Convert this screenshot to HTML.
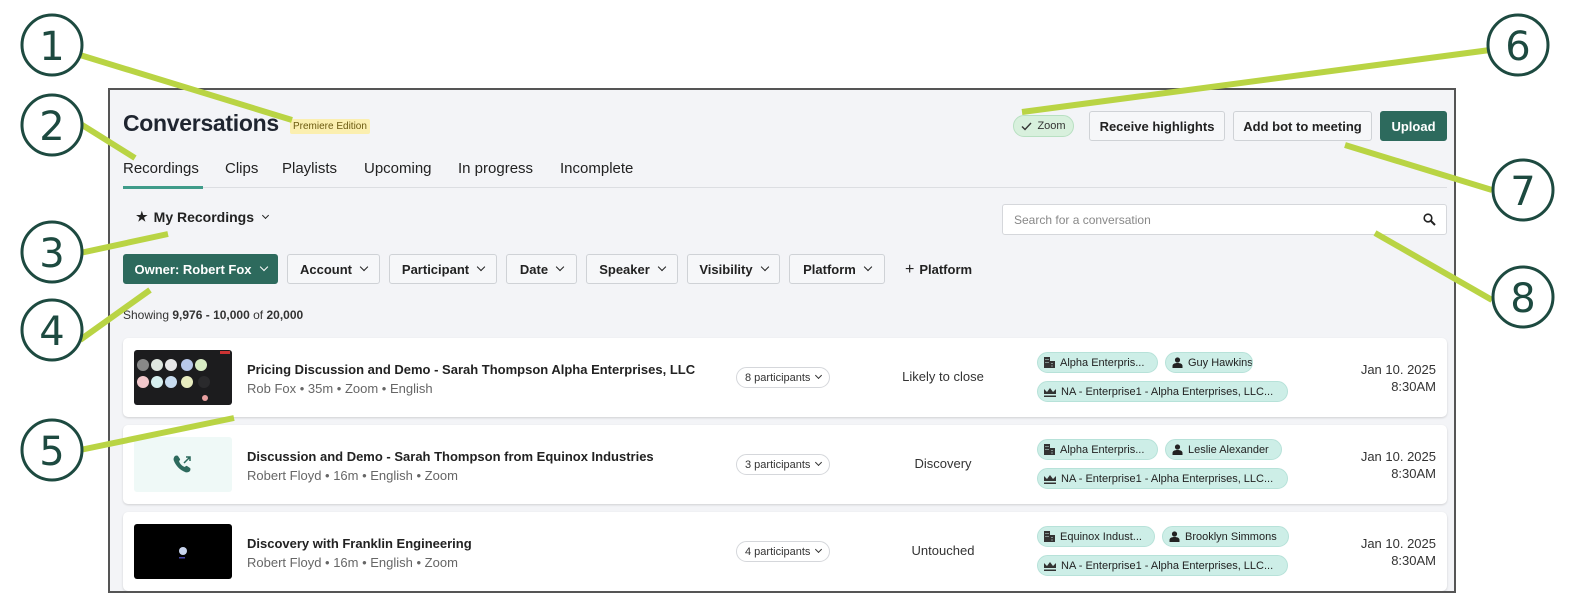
<!DOCTYPE html>
<html><head><meta charset="utf-8"><style>
*{box-sizing:border-box;margin:0;padding:0}
body{width:1586px;height:612px;background:#fff;position:relative;overflow:hidden;font-family:"Liberation Sans",sans-serif;color:#1f2328}
.frame{position:absolute;left:108px;top:88px;width:1348px;height:505px;background:#f3f4f7;border:2px solid #555;overflow:hidden}
.abs{position:absolute}
.btn{position:absolute;height:30px;border:1px solid #cfd2d6;border-radius:3px;background:#f6f7f9;font-size:13px;font-weight:bold;display:flex;align-items:center;justify-content:center;color:#222;white-space:nowrap}
.chev{display:inline-block;width:6px;height:6px;border-right:1.6px solid currentColor;border-bottom:1.6px solid currentColor;transform:rotate(45deg);margin-left:9px;margin-top:-4px}
.tab{position:absolute;top:70px;font-size:15px;color:#222}
.card{position:absolute;left:13px;width:1324px;height:79px;background:#fff;border-radius:5px;box-shadow:0 1px 2px rgba(0,0,0,.15)}
.thumb{position:absolute;left:11px;top:12px;width:98px;height:55px;border-radius:3px}
.title{position:absolute;left:124px;top:24px;font-size:13px;font-weight:bold;color:#222;white-space:nowrap}
.meta{position:absolute;left:124px;top:43px;font-size:13px;color:#666;white-space:nowrap}
.part{position:absolute;left:613px;top:29px;height:21px;padding:0 8px;border:1px solid #d5d7db;border-radius:11px;font-size:11px;display:flex;align-items:center;color:#333;white-space:nowrap}
.part .chev{width:5px;height:5px;margin-left:6px;border-width:1.2px}
.stage{position:absolute;left:720px;width:200px;text-align:center;top:31px;font-size:13px;color:#333}
.chip{position:absolute;height:21px;border-radius:11px;background:#cdeee7;border:1px solid #b7e2d9;font-size:11px;display:flex;align-items:center;padding:0 6px 0 6px;color:#222;white-space:nowrap;overflow:hidden}
.chip svg{margin-right:5px;flex:none}
.date{position:absolute;right:11px;top:23px;text-align:right;font-size:13px;line-height:17px;color:#333}
</style></head><body>

<div class="frame">
  <div class="abs" style="left:13px;top:20px;font-size:23px;font-weight:bold;color:#1f2530;letter-spacing:-0.3px">Conversations</div>
  <div class="abs" style="left:180px;top:29px;background:#fbefb0;color:#6b5a10;font-size:10px;padding:2px 3px;border-radius:2px">Premiere Edition</div>

  <div class="abs" style="left:903px;top:25px;height:22px;width:61px;border-radius:11px;background:#d8f0dd;border:1px solid #b8e0c2;font-size:11px;display:flex;align-items:center;justify-content:center;color:#333">
    <svg width="11" height="9" viewBox="0 0 11 9" style="margin-right:5px"><path d="M1 4.5 L4 7.5 L10 1" fill="none" stroke="#333" stroke-width="1.4"/></svg>Zoom</div>
  <div class="btn" style="left:979px;top:21px;width:136px">Receive highlights</div>
  <div class="btn" style="left:1123px;top:21px;width:139px">Add bot to meeting</div>
  <div class="btn" style="left:1270px;top:21px;width:67px;background:#2d6a5d;border-color:#2d6a5d;color:#fff">Upload</div>

  <div class="tab" style="left:13px">Recordings</div>
  <div class="tab" style="left:115px">Clips</div>
  <div class="tab" style="left:172px">Playlists</div>
  <div class="tab" style="left:254px">Upcoming</div>
  <div class="tab" style="left:348px">In progress</div>
  <div class="tab" style="left:450px">Incomplete</div>
  <div class="abs" style="left:13px;top:97px;width:1324px;height:1px;background:#dcdee2"></div>
  <div class="abs" style="left:13px;top:96px;width:80px;height:3px;background:#3f9c8a"></div>

  <div class="abs" style="left:26px;top:119px;font-size:14px;font-weight:bold;color:#222;display:flex;align-items:center">
    <span style="font-size:13px;margin-right:6px">★</span>My Recordings<span class="chev" style="width:5px;height:5px;border-width:1.4px"></span></div>

  <div class="abs" style="left:892px;top:114px;width:445px;height:31px;background:#fff;border:1px solid #d5d7db;border-radius:3px;font-size:12px;color:#888;padding:8px 11px">Search for a conversation
    <svg width="13" height="13" viewBox="0 0 13 13" style="position:absolute;right:10px;top:8px"><circle cx="5" cy="5" r="3.8" fill="none" stroke="#222" stroke-width="1.6"/><path d="M8 8 L12 12" stroke="#222" stroke-width="2"/></svg></div>

  <div class="btn" style="left:13px;top:164px;width:155px;background:#2d6a5d;border-color:#2d6a5d;color:#fff">Owner: Robert Fox<span class="chev"></span></div>
  <div class="btn" style="left:177px;top:164px;width:93px">Account<span class="chev"></span></div>
  <div class="btn" style="left:279px;top:164px;width:108px">Participant<span class="chev"></span></div>
  <div class="btn" style="left:396px;top:164px;width:71px">Date<span class="chev"></span></div>
  <div class="btn" style="left:476px;top:164px;width:92px">Speaker<span class="chev"></span></div>
  <div class="btn" style="left:577px;top:164px;width:93px">Visibility<span class="chev"></span></div>
  <div class="btn" style="left:679px;top:164px;width:96px">Platform<span class="chev"></span></div>
  <div class="abs" style="left:795px;top:171px;font-size:13px;font-weight:bold;color:#222"><span style="font-weight:normal;font-size:16px;margin-right:5px">+</span>Platform</div>

  <div class="abs" style="left:13px;top:218px;font-size:12px;color:#333">Showing <b>9,976 - 10,000</b> of <b>20,000</b></div>

  <!-- card 1 -->
  <div class="card" style="top:248px">
    <div class="thumb" style="background:#1c1c1e">
      <svg width="98" height="55" viewBox="0 0 98 55">
        <circle cx="9" cy="15" r="6" fill="#888"/><circle cx="23" cy="15" r="6" fill="#dfe7e0"/><circle cx="37" cy="15" r="6" fill="#e8e8e8"/><circle cx="53" cy="15" r="6" fill="#b8c8ea"/><circle cx="67" cy="15" r="6" fill="#d8ecc4"/>
        <circle cx="9" cy="32" r="6" fill="#f2c8cc"/><circle cx="23" cy="32" r="6" fill="#d8f0f0"/><circle cx="37" cy="32" r="6" fill="#c8dcf0"/><circle cx="53" cy="32" r="6" fill="#e8ecc0"/><circle cx="70" cy="32" r="6" fill="#2a2a2c"/>
        <circle cx="71" cy="48" r="3" fill="#e8a0a0"/><rect x="86" y="1" width="10" height="3" fill="#c33"/>
      </svg>
    </div>
    <div class="title">Pricing Discussion and Demo - Sarah Thompson Alpha Enterprises, LLC</div>
    <div class="meta">Rob Fox • 35m • Zoom • English</div>
    <div class="part">8 participants<span class="chev"></span></div>
    <div class="stage">Likely to close</div>
    <div class="chip" style="left:914px;top:14px;width:121px"><svg width="11" height="11" viewBox="0 0 11 11"><path d="M0 0h6v11H0zM6 4h5v7H6z" fill="#333"/><path d="M1.5 2h1v1h-1zM3.5 2h1v1h-1zM1.5 5h1v1h-1zM3.5 5h1v1h-1zM7.5 6h1v1h-1zM7.5 8.5h1v1h-1z" fill="#cdeee7"/></svg>Alpha Enterpris...</div>
    <div class="chip" style="left:1042px;top:14px;width:88px"><svg width="11" height="11" viewBox="0 0 11 11"><circle cx="5.5" cy="3" r="2.6" fill="#222"/><path d="M0.5 11v-2c0-2 2-3 5-3s5 1 5 3v2z" fill="#222"/></svg>Guy Hawkins</div>
    <div class="chip" style="left:914px;top:43px;width:251px"><svg width="12" height="10" viewBox="0 0 12 10"><path d="M0 2l3 3 3-4 3 4 3-3v5H0z M0 8.5h12V10H0z" fill="#333"/></svg>NA - Enterprise1 - Alpha Enterprises, LLC...</div>
    <div class="date">Jan 10. 2025<br>8:30AM</div>
  </div>

  <!-- card 2 -->
  <div class="card" style="top:335px">
    <div class="thumb" style="background:#eff9f7"><svg width="98" height="55" viewBox="0 0 98 55"><path d="M41 19c0 0 2-1 3 0l2 3c0.5 1-1 2-1 2c1 3 3 5 6 6c0 0 1-1.5 2-1l3 2c1 1 0 3 0 3c-1 1-3 2-5 1c-5-2-9-6-11-11c-1-2 0-4 1-5z" fill="#2d6a5d"/><path d="M50 26l6-6M52 20h4v4" fill="none" stroke="#2d6a5d" stroke-width="1.5"/></svg></div>
    <div class="title">Discussion and Demo - Sarah Thompson from Equinox Industries</div>
    <div class="meta">Robert Floyd • 16m • English • Zoom</div>
    <div class="part">3 participants<span class="chev"></span></div>
    <div class="stage">Discovery</div>
    <div class="chip" style="left:914px;top:14px;width:121px"><svg width="11" height="11" viewBox="0 0 11 11"><path d="M0 0h6v11H0zM6 4h5v7H6z" fill="#333"/><path d="M1.5 2h1v1h-1zM3.5 2h1v1h-1zM1.5 5h1v1h-1zM3.5 5h1v1h-1zM7.5 6h1v1h-1zM7.5 8.5h1v1h-1z" fill="#cdeee7"/></svg>Alpha Enterpris...</div>
    <div class="chip" style="left:1042px;top:14px;width:117px"><svg width="11" height="11" viewBox="0 0 11 11"><circle cx="5.5" cy="3" r="2.6" fill="#222"/><path d="M0.5 11v-2c0-2 2-3 5-3s5 1 5 3v2z" fill="#222"/></svg>Leslie Alexander</div>
    <div class="chip" style="left:914px;top:43px;width:251px"><svg width="12" height="10" viewBox="0 0 12 10"><path d="M0 2l3 3 3-4 3 4 3-3v5H0z M0 8.5h12V10H0z" fill="#333"/></svg>NA - Enterprise1 - Alpha Enterprises, LLC...</div>
    <div class="date">Jan 10. 2025<br>8:30AM</div>
  </div>

  <!-- card 3 -->
  <div class="card" style="top:422px">
    <div class="thumb" style="background:#000"><svg width="98" height="55" viewBox="0 0 98 55"><circle cx="49" cy="27" r="4" fill="#c8d4ec"/><rect x="45" y="33" width="6" height="1.5" fill="#4040a0"/></svg></div>
    <div class="title">Discovery with Franklin Engineering</div>
    <div class="meta">Robert Floyd • 16m • English • Zoom</div>
    <div class="part">4 participants<span class="chev"></span></div>
    <div class="stage">Untouched</div>
    <div class="chip" style="left:914px;top:14px;width:118px"><svg width="11" height="11" viewBox="0 0 11 11"><path d="M0 0h6v11H0zM6 4h5v7H6z" fill="#333"/><path d="M1.5 2h1v1h-1zM3.5 2h1v1h-1zM1.5 5h1v1h-1zM3.5 5h1v1h-1zM7.5 6h1v1h-1zM7.5 8.5h1v1h-1z" fill="#cdeee7"/></svg>Equinox Indust...</div>
    <div class="chip" style="left:1039px;top:14px;width:127px"><svg width="11" height="11" viewBox="0 0 11 11"><circle cx="5.5" cy="3" r="2.6" fill="#222"/><path d="M0.5 11v-2c0-2 2-3 5-3s5 1 5 3v2z" fill="#222"/></svg>Brooklyn Simmons</div>
    <div class="chip" style="left:914px;top:43px;width:251px"><svg width="12" height="10" viewBox="0 0 12 10"><path d="M0 2l3 3 3-4 3 4 3-3v5H0z M0 8.5h12V10H0z" fill="#333"/></svg>NA - Enterprise1 - Alpha Enterprises, LLC...</div>
    <div class="date">Jan 10. 2025<br>8:30AM</div>
  </div>
</div>

<svg class="abs" style="left:0;top:0" width="1586" height="612" viewBox="0 0 1586 612">
  <g stroke="#b9d444" stroke-width="6" stroke-linecap="butt">
    <line x1="80" y1="55" x2="292" y2="120"/>
    <line x1="79" y1="123" x2="135" y2="158"/>
    <line x1="80" y1="253" x2="168" y2="234"/>
    <line x1="80" y1="340" x2="150" y2="290"/>
    <line x1="80" y1="450" x2="234" y2="418"/>
    <line x1="1490" y1="50" x2="1022" y2="112"/>
    <line x1="1345" y1="145" x2="1492" y2="190"/>
    <line x1="1375" y1="233" x2="1492" y2="300"/>
  </g>
  <g fill="#fff" stroke="#1d4a40" stroke-width="3">
    <ellipse cx="52" cy="45" rx="30" ry="30"/>
    <ellipse cx="52" cy="125" rx="30" ry="30"/>
    <ellipse cx="52" cy="252" rx="30" ry="30"/>
    <ellipse cx="52" cy="330" rx="30" ry="30"/>
    <ellipse cx="52" cy="450" rx="30" ry="30"/>
    <ellipse cx="1518" cy="45" rx="30" ry="30"/>
    <ellipse cx="1523" cy="190" rx="30" ry="30"/>
    <ellipse cx="1523" cy="297" rx="30" ry="30"/>
  </g>
  <g fill="#1d4a40" font-family="DejaVu Sans" font-size="40" text-anchor="middle">
    <text x="52" y="60">1</text><text x="52" y="140">2</text><text x="52" y="267">3</text><text x="52" y="345">4</text><text x="52" y="465">5</text>
    <text x="1518" y="60">6</text><text x="1523" y="205">7</text><text x="1523" y="312">8</text>
  </g>
</svg>
</body></html>
